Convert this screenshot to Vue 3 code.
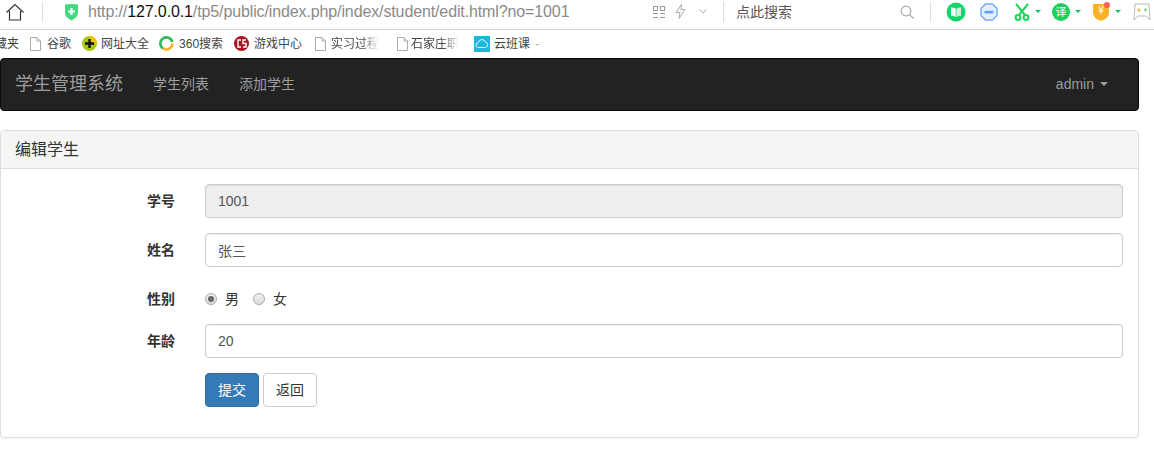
<script setup>
const navLinks = ['学生列表', '添加学生']
</script>

<template>
  <div class="page">
    <div class="addressbar">
      <svg class="home" width="20" height="20" viewBox="0 0 20 20"><path d="M1.5 10.5 10 2.5l8.500 8M4.500 9v9h11V9" fill="none" stroke="#333" stroke-width="1.200"/></svg>
      <span class="vsep first"></span>
      <svg class="shield" width="15" height="18" viewBox="0 0 15 18"><path d="M1 1.500Q7.500 .5 14 1.500V10q0 4-6.500 7.500Q1 14 1 10Z" fill="#41d97f"/><path d="M7.500 5v7M4 8.500h7" stroke="#fff" stroke-width="2.200"/></svg>
      <div class="url"><span>http://</span><b>127.0.0.1</b><span>/tp5/public/index.php/index/student/edit.html?no=1001</span></div>
      <svg class="grid" width="12" height="12" viewBox="0 0 12 12" fill="none" stroke="#999"><rect x=".5" y=".5" width="4" height="4"/><rect x="7.500" y=".5" width="4" height="4"/><path d="M0 7.500h5M0 11.500h5M7 7.500h5M7 11.500h5"/></svg>
      <svg class="bolt" width="11" height="15" viewBox="0 0 11 15"><path d="M6.500.5 1 8.500h4l-1 6 6-9H6Z" fill="none" stroke="#aaa"/></svg>
      <svg class="chev" width="8" height="5" viewBox="0 0 8 5"><path d="m.5.5 3.500 3.500L7.500.5" fill="none" stroke="#aaa"/></svg>
      <span class="vsep second"></span>
      <span class="search">点此搜索</span>
      <svg class="mag" width="14" height="14" viewBox="0 0 14 14" fill="none" stroke="#aaa" stroke-width="1.200"><circle cx="6" cy="6" r="4.800"/><path d="m9.500 9.500 4 4"/></svg>
      <span class="vsep third"></span>
      <svg class="tool book" width="20" height="20" viewBox="0 0 20 20"><circle cx="10" cy="10" r="9.500" fill="#15d66b"/><path d="M5 5.500q2.800 0 4.800 1.200V15q-2-1.200-4.800-1.200Z" fill="#fff"/><path d="M10.400 6.700q2-1.200 4.600-1.200v8.300q-2.600 0-4.600 1.200Z" fill="#c9f3dc"/></svg>
      <svg class="tool minus" width="18" height="18" viewBox="0 0 18 18"><path d="M5.500 1h7L17 5.500v7L12.500 17h-7L1 12.500v-7Z" fill="#e4effe" stroke="#74aefc" stroke-width="1.500"/><rect x="4.500" y="7.800" width="9" height="2.600" fill="#5f9ef5"/></svg>
      <svg class="tool scissors" width="16" height="18" viewBox="0 0 16 18" fill="none" stroke="#1fd35c" stroke-width="2"><path d="M2 1l9 11M14 1 5 12"/><circle cx="4" cy="14.500" r="2.400"/><circle cx="12" cy="14.500" r="2.400"/></svg>
      <i class="drop scissors-drop"></i>
      <span class="tool trans">译</span>
      <i class="drop"></i>
      <span class="tool badge"><svg width="18" height="20" viewBox="0 0 18 20"><path d="M1 2h16v9q0 5-8 8-8-3-8-8Z" fill="#fbb025"/><circle cx="15" cy="3" r="3" fill="#f8605a"/></svg><em>¥</em></span>
      <i class="drop"></i>
      <svg class="tool game" width="18" height="18" viewBox="0 0 18 18"><path d="M2 1h14l1 16-4-4H5l-4 4Z" fill="#fff" stroke="#bbb"/><circle cx="6" cy="7" r="1.500" fill="#f5b92d"/><path d="M11 7h3M12.500 5.500v3" stroke="#4fcf6a"/></svg>
      <i class="drop"></i>
    </div>

    <div class="bookmarks">
      <span class="bm cut">藏夹</span>
      <svg class="file m1" width="11" height="14" viewBox="0 0 11 14"><path d="M.5.5h6.500l3.500 3.500v9.500H.5ZM7 .5V4h3.500" fill="#fff" stroke="#aaa"/></svg>
      <span class="bm t1">谷歌</span>
      <svg class="ic m2" width="15" height="15" viewBox="0 0 15 15"><circle cx="7.500" cy="7.500" r="7.500" fill="#a7c70d"/><path d="M7.500 0A7.500 7.500 0 0 1 15 7.500H7.500Z" fill="#f2c400"/><path d="M7.500 3v9M3 7.500h9" stroke="#111" stroke-width="2.400"/></svg>
      <span class="bm t2">网址大全</span>
      <svg class="ic m3" width="15" height="15" viewBox="0 0 15 15" fill="none" stroke-width="2.600"><path d="M4 12.400A6 6 0 1 1 13.200 6" stroke="#30b85a"/><path d="M13.400 7.500A6 6 0 0 1 4 12.400" stroke="#f6b52a"/></svg>
      <span class="bm t3">360搜索</span>
      <svg class="ic m4" width="15" height="15" viewBox="0 0 15 15"><circle cx="7.500" cy="7.500" r="7.500" fill="#aa1020"/><path d="M7 4H4v7h3M12 4H9v3.500h3V11H9" fill="none" stroke="#fff" stroke-width="1.400"/></svg>
      <span class="bm t4">游戏中心</span>
      <svg class="file m5" width="11" height="14" viewBox="0 0 11 14"><path d="M.5.5h6.500l3.500 3.500v9.500H.5ZM7 .5V4h3.500" fill="#fff" stroke="#aaa"/></svg>
      <span class="bm fade t5">实习过程</span>
      <svg class="file m6" width="11" height="14" viewBox="0 0 11 14"><path d="M.5.5h6.500l3.500 3.500v9.500H.5ZM7 .5V4h3.500" fill="#fff" stroke="#aaa"/></svg>
      <span class="bm fade t6">石家庄职</span>
      <svg class="ic m7" width="16" height="16" viewBox="0 0 16 16"><rect width="16" height="16" fill="#1fb7dc"/><path d="M4.500 11.500a2.500 2.500 0 0 1 0-5 3.500 3.500 0 0 1 6.800-.5 2.800 2.800 0 0 1 0 5.500Z" fill="none" stroke="#d9f7ff"/></svg>
      <span class="bm t7">云班课</span>
      <span class="bm dash">-</span>
    </div>

    <nav class="navbar">
      <span class="brand">学生管理系统</span>
      <a v-for="l in navLinks" :key="l" class="navlink">{{ l }}</a>
      <span class="user">admin<i class="caret"></i></span>
    </nav>

    <section class="panel">
      <header class="panel-head">编辑学生</header>
      <form class="panel-body">
        <div class="row">
          <label>学号</label>
          <input class="ctl" value="1001" disabled />
        </div>
        <div class="row">
          <label>姓名</label>
          <input class="ctl" value="张三" />
        </div>
        <div class="row radios">
          <label>性别</label>
          <span class="radio checked"></span><span class="rtext">男</span>
          <span class="radio"></span><span class="rtext">女</span>
        </div>
        <div class="row">
          <label>年龄</label>
          <input class="ctl" value="20" />
        </div>
        <div class="row last">
          <label></label>
          <button type="button" class="btn primary">提交</button>
          <button type="button" class="btn">返回</button>
        </div>
      </form>
    </section>
  </div>
</template>

<style scoped>
.page {
  width: 1154px;
  height: 460px;
  overflow: hidden;
  background: #fff;
  font: 14px/20px "Liberation Sans", "Noto Sans CJK SC", sans-serif;
  color: #333;
}
.addressbar {
  height: 29px;
  box-sizing: content-box;
  border-bottom: 1px solid #d4d4d4;
  display: flex;
  align-items: center;
  padding-bottom: 0;
  white-space: nowrap;
  overflow: hidden;
}
.addressbar > * { flex: none; margin-top: -6px; }
.home { margin-left: 5px; }
.vsep { width: 1px; height: 20px; background: #ddd; }
.vsep.first { margin-left: 17px; }
.shield { margin-left: 21px; }
.url { margin-left: 9px; width: 520px; font-size: 16px; color: #8a8a8a; letter-spacing: -.12px; }
.url b { font-weight: normal; color: #111; }
.grid { margin-left: 45px; }
.bolt { margin-left: 10px; }
.chev { margin-left: 13px; }
.vsep.second { margin-left: 16px; }
.search { margin-left: 12px; width: 164px; font-size: 14px; color: #555; }
.vsep.third { margin-left: 16px; }
.book { margin-left: 15px; }
.minus { margin-left: 14px; }
.scissors { margin-left: 16px; }
.drop { width: 0; height: 0; border: 3px solid transparent; border-top: 3px solid #17c45a; border-bottom: 0; margin-left: 5px; }
.scissors-drop { margin-left: 5px; }
.trans { margin-left: 11px; width: 18px; height: 18px; border-radius: 50%; background: #1fcf5c; color: #fff; font-size: 11px; line-height: 18px; text-align: center; }
.badge { margin-left: 11px; width: 18px; height: 20px; display: block; position: relative; }
.badge svg { display: block; }
.badge em { position: absolute; left: 0; top: 0; width: 18px; text-align: center; font: 10px/18px "Liberation Sans", sans-serif; color: #fff; }
.game { margin-left: 12px; }

.bookmarks {
  height: 28px;
  display: flex;
  align-items: center;
  font-size: 12px;
  white-space: nowrap;
  color: #444;
  overflow: hidden;
}
.bookmarks > * { flex: none; margin-top: -1px; }
.cut { margin-left: -5px; width: 24px; }
.m1 { margin-left: 11px; }
.t1 { margin-left: 6px; }
.m2 { margin-left: 11px; }
.t2 { margin-left: 4px; }
.m3 { margin-left: 10px; }
.t3 { margin-left: 5px; }
.m4 { margin-left: 11px; }
.t4 { margin-left: 5px; }
.m5 { margin-left: 13px; }
.t5 { margin-left: 5px; }
.m6 { margin-left: 18px; }
.t6 { margin-left: 3px; }
.m7 { margin-left: 15px; }
.t7 { margin-left: 4px; }
.dash { margin-left: 5px; color: #aaa; }
.fade {
  -webkit-mask-image: linear-gradient(90deg, #000 65%, transparent 100%);
  mask-image: linear-gradient(90deg, #000 65%, transparent 100%);
}

.navbar {
  width: 1139px;
  height: 53px;
  box-sizing: border-box;
  background: #222;
  border: 1px solid #080808;
  border-radius: 4px;
  display: flex;
  align-items: center;
  padding: 0 0 2px 14px;
  color: #9d9d9d;
}
.brand { font-size: 18px; width: 124px; }
.navlink { margin-left: 14px; width: 56px; }
.navlink + .navlink { margin-left: 30px; }
.user { margin-left: auto; margin-right: 30px; display: flex; align-items: center; }
.caret { margin-left: 6px; width: 0; height: 0; border: 4px solid transparent; border-top: 4px solid #9d9d9d; border-bottom: 0; }

.panel {
  width: 1139px;
  height: 308px;
  box-sizing: border-box;
  margin-top: 19px;
  border: 1px solid #ddd;
  border-radius: 4px;
  box-shadow: 0 1px 1px rgba(0, 0, 0, .05);
}
.panel-head {
  height: 38px;
  box-sizing: border-box;
  padding: 9px 14px;
  background: #f5f5f5;
  border-bottom: 1px solid #ddd;
  font-size: 16px;
  line-height: 20px;
  border-radius: 3px 3px 0 0;
}
.panel-body { padding: 15px 15px 0 0; }
.row { display: flex; align-items: center; margin-bottom: 15px; }
.row label { width: 174px; flex: none; text-align: right; font-weight: bold; margin-right: 30px; }
.ctl {
  flex: none;
  width: 918px;
  height: 34px;
  box-sizing: border-box;
  padding: 6px 12px;
  border: 1px solid #ccc;
  border-radius: 4px;
  background: #fff;
  font: inherit;
  color: #555;
  box-shadow: inset 0 1px 1px rgba(0, 0, 0, .075);
  outline: none;
}
.ctl:disabled { background: #eee; opacity: 1; color: #555; }
.radios { height: 27px; padding-top: 7px; box-sizing: border-box; }
.radio {
  flex: none;
  width: 12px;
  height: 12px;
  box-sizing: border-box;
  border: 1px solid #aaa;
  border-radius: 50%;
  background: linear-gradient(#eee, #ddd);
  display: flex;
  align-items: center;
  justify-content: center;
}
.radio.checked::after { content: ""; width: 6px; height: 6px; border-radius: 50%; background: #666; }
.rtext { margin: 0 14px 0 8px; }
.btn {
  flex: none;
  width: 54px;
  height: 34px;
  box-sizing: border-box;
  padding: 0;
  margin-right: 4px;
  border: 1px solid #ccc;
  border-radius: 4px;
  background: #fff;
  font: inherit;
  color: #333;
}
.btn.primary { background: #337ab7; border-color: #2e6da4; color: #fff; }
</style>
